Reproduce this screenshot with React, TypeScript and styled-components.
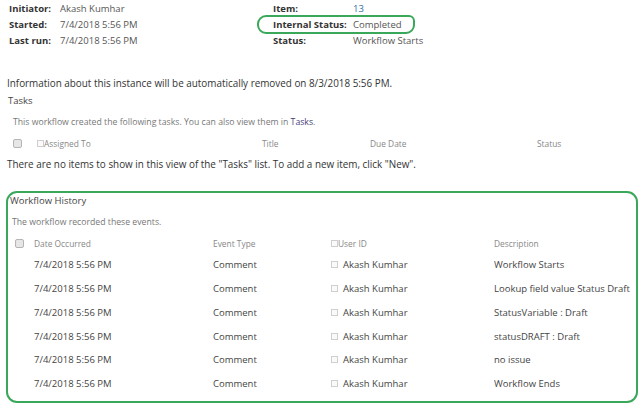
import React from "react";
import styled, { createGlobalStyle } from "styled-components";

const GlobalStyle = createGlobalStyle`
  body {
    margin: 0;
    background: #fff;
    font-family: "Open Sans", "Noto Sans", sans-serif;
    color: #444;
  }
`;

const history = [
  "Workflow Starts",
  "Lookup field value Status Draft",
  "StatusVariable :  Draft",
  "statusDRAFT : Draft",
  "no issue",
  "Workflow Ends",
];

function App() {
  return (
    <>
      <GlobalStyle />
      <Page>
        <Summary>
          <Label>Initiator:</Label>
          <Value>Akash Kumhar</Value>
          <Label>Item:</Label>
          <Value $link>13</Value>
          <Label>Started:</Label>
          <Value>7/4/2018 5:56 PM</Value>
          <Label>Internal Status:</Label>
          <Value>Completed</Value>
          <Label>Last run:</Label>
          <Value>7/4/2018 5:56 PM</Value>
          <Label>Status:</Label>
          <Value>Workflow Starts</Value>
          <Highlight />
        </Summary>

        <Notice>
          Information about this instance will be automatically removed on
          8/3/2018 5:56 PM.
        </Notice>
        <SectionTitle $indent={8}>Tasks</SectionTitle>
        <SmallText $indent={13}>
          This workflow created the following tasks. You can also view them in{" "}
          <TaskLink>Tasks</TaskLink>.
        </SmallText>
        <TaskHeader>
          <Check />
          <HeadCell>
            <Tick />
            Assigned To
          </HeadCell>
          <HeadCell>Title</HeadCell>
          <HeadCell>Due Date</HeadCell>
          <HeadCell>Status</HeadCell>
        </TaskHeader>
        <Notice $tight>
          There are no items to show in this view of the "Tasks" list. To add a
          new item, click "New".
        </Notice>

        <HistoryBox>
          <SectionTitle $indent={2}>Workflow History</SectionTitle>
          <SmallText $indent={4}>The workflow recorded these events.</SmallText>
          <HistoryGrid>
            <Check />
            <HeadCell>Date Occurred</HeadCell>
            <HeadCell>Event Type</HeadCell>
            <HeadCell>
              <Tick />
              User ID
            </HeadCell>
            <HeadCell>Description</HeadCell>
            {history.map((desc, i) => (
              <React.Fragment key={i}>
                <span />
                <Cell>7/4/2018 5:56 PM</Cell>
                <Cell>Comment</Cell>
                <Cell>
                  <Tick $gap />
                  Akash Kumhar
                </Cell>
                <Cell>{desc}</Cell>
              </React.Fragment>
            ))}
          </HistoryGrid>
        </HistoryBox>
      </Page>
    </>
  );
}

const Page = styled.div`
  display: flex;
  flex-direction: column;
  width: 642px;
  height: 403px;
  overflow: hidden;
`;

const Summary = styled.div`
  position: relative;
  display: grid;
  grid-template-columns: 51px 213px 80px auto;
  grid-auto-rows: 16px;
  align-items: center;
  padding-left: 9px;
`;

const Label = styled.span`
  font-size: 9.5px;
  font-weight: 700;
  color: #333;
  white-space: nowrap;
`;

const Value = styled.span<{ $link?: boolean }>`
  font-size: 9.5px;
  color: ${(p) => (p.$link ? "#2f6fa8" : "#555")};
  white-space: nowrap;
`;

const Highlight = styled.div`
  position: absolute;
  left: 257px;
  top: 15px;
  width: 158px;
  height: 19px;
  box-sizing: border-box;
  border: 2px solid #3aa85a;
  border-radius: 9px 6px 9px 9px;
`;

const Notice = styled.div<{ $tight?: boolean }>`
  margin-top: ${(p) => (p.$tight ? "5px" : "27px")};
  padding-left: 7px;
  height: 16px;
  line-height: 16px;
  font-size: 9.9px;
  color: #333;
  white-space: nowrap;
`;

const SectionTitle = styled.div<{ $indent: number }>`
  margin-top: 2px;
  padding-left: ${(p) => p.$indent}px;
  height: 16px;
  line-height: 16px;
  font-size: 9.5px;
  color: #444;
`;

const SmallText = styled.div<{ $indent: number }>`
  margin-top: 5px;
  padding-left: ${(p) => p.$indent}px;
  height: 16px;
  line-height: 16px;
  font-size: 8.7px;
  color: #777;
  white-space: nowrap;
`;

const TaskLink = styled.span`
  color: #45407a;
`;

const TaskHeader = styled.div`
  display: grid;
  grid-template-columns: 24px 225px 108px 167px auto;
  align-items: center;
  height: 16px;
  margin-top: 5px;
  padding-left: 13px;
`;

const HeadCell = styled.span`
  display: flex;
  align-items: center;
  font-size: 8.4px;
  color: #888;
  white-space: nowrap;
`;

const Cell = styled.span`
  display: flex;
  align-items: center;
  font-size: 9.5px;
  color: #444;
  white-space: nowrap;
  overflow: hidden;
`;

const Check = styled.span`
  display: block;
  width: 9px;
  height: 9px;
  box-sizing: border-box;
  border: 1px solid #b5b5b5;
  border-radius: 2px;
  background: #e6e6e6;
`;

const Tick = styled.span<{ $gap?: boolean }>`
  display: inline-block;
  width: 7px;
  height: 7px;
  margin-right: ${(p) => (p.$gap ? "5px" : "0")};
  box-sizing: border-box;
  border: 1px solid #cfcfcf;
  background: #fafafa;
`;

const HistoryBox = styled.div`
  margin: 19px 0 0 6px;
  width: 632px;
  box-sizing: border-box;
  border: 2px solid #3aa85a;
  border-radius: 11px;
  flex: 1;
  & > ${SectionTitle} {
    margin-top: 0;
  }
`;

const HistoryGrid = styled.div`
  display: grid;
  grid-template-columns: 19px 179px 118px 163px auto;
  grid-template-rows: 16px;
  grid-auto-rows: 20px;
  row-gap: 3.8px;
  align-items: center;
  margin-top: 5px;
  padding-left: 7px;
`;

export default App;
